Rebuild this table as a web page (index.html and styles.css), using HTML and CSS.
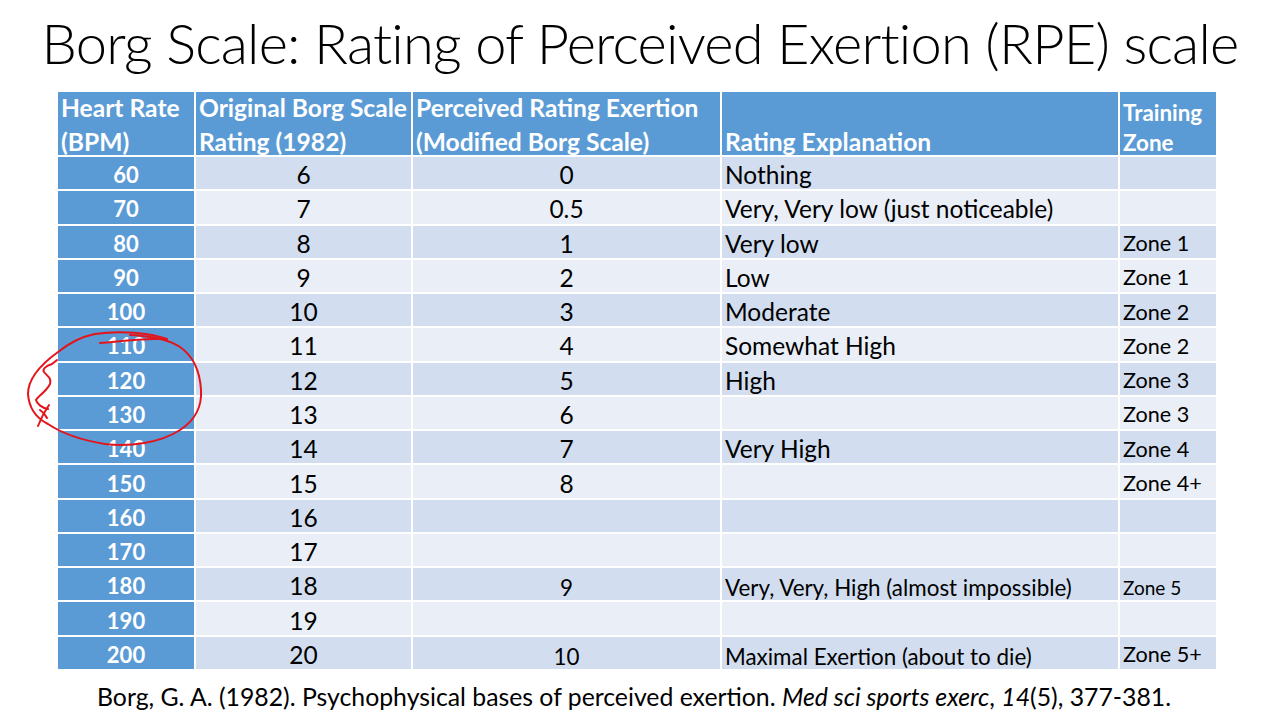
FILE: index.html
```html
<!DOCTYPE html>
<html lang="en">
<head>
<meta charset="utf-8">
<title>Borg Scale</title>
<link rel="stylesheet" href="styles.css">
</head>
<body>
<div class="slide">
  <h1 class="title">Borg Scale: Rating of Perceived Exertion (RPE) scale</h1>
  <div class="table-wrap">
    <div class="grid">
      <div class="hd"><span>Heart Rate<br>(BPM)</span></div>
      <div class="hd"><span>Original Borg Scale<br>Rating (1982)</span></div>
      <div class="hd"><span>Perceived Rating Exertion<br>(Modified Borg Scale)</span></div>
      <div class="hd"><span>Rating Explanation</span></div>
      <div class="hd hd-zone"><span>Training<br>Zone</span></div>

      <div class="c hr odd">60</div><div class="c num odd">6</div><div class="c num odd">0</div><div class="c txt odd">Nothing</div><div class="c zone odd"></div>
      <div class="c hr">70</div><div class="c num">7</div><div class="c num">0.5</div><div class="c txt">Very, Very low (just noticeable)</div><div class="c zone"></div>
      <div class="c hr odd">80</div><div class="c num odd">8</div><div class="c num odd">1</div><div class="c txt odd">Very low</div><div class="c zone odd">Zone 1</div>
      <div class="c hr">90</div><div class="c num">9</div><div class="c num">2</div><div class="c txt">Low</div><div class="c zone">Zone 1</div>
      <div class="c hr odd">100</div><div class="c num odd">10</div><div class="c num odd">3</div><div class="c txt odd">Moderate</div><div class="c zone odd">Zone 2</div>
      <div class="c hr">110</div><div class="c num">11</div><div class="c num">4</div><div class="c txt">Somewhat High</div><div class="c zone">Zone 2</div>
      <div class="c hr odd">120</div><div class="c num odd">12</div><div class="c num odd">5</div><div class="c txt odd">High</div><div class="c zone odd">Zone 3</div>
      <div class="c hr">130</div><div class="c num">13</div><div class="c num">6</div><div class="c txt"></div><div class="c zone">Zone 3</div>
      <div class="c hr odd">140</div><div class="c num odd">14</div><div class="c num odd">7</div><div class="c txt odd">Very High</div><div class="c zone odd">Zone 4</div>
      <div class="c hr">150</div><div class="c num">15</div><div class="c num">8</div><div class="c txt"></div><div class="c zone">Zone 4+</div>
      <div class="c hr odd">160</div><div class="c num odd">16</div><div class="c num odd"></div><div class="c txt odd"></div><div class="c zone odd"></div>
      <div class="c hr">170</div><div class="c num">17</div><div class="c num"></div><div class="c txt"></div><div class="c zone"></div>
      <div class="c hr odd">180</div><div class="c num odd">18</div><div class="c num odd sm">9</div><div class="c txt odd sm">Very, Very, High (almost impossible)</div><div class="c zone odd zs">Zone 5</div>
      <div class="c hr">190</div><div class="c num">19</div><div class="c num"></div><div class="c txt"></div><div class="c zone"></div>
      <div class="c hr odd">200</div><div class="c num odd">20</div><div class="c num odd sm">10</div><div class="c txt odd sm">Maximal Exertion (about to die)</div><div class="c zone odd">Zone 5+</div>
    </div>
    <svg class="ink" width="240" height="140" viewBox="0 0 240 140" aria-hidden="true">
      <g transform="translate(-10 -320)" fill="none" stroke="#e3141b" stroke-width="2" stroke-linecap="round" stroke-linejoin="round">
        <path d="M100 343 C 125 341, 150 338, 167 339"/>
        <path d="M167 339 C 150 333, 120 330, 95 334 C 80 337, 68 344, 58 352 C 40 365, 28 380, 28 394 C 29 408, 36 418, 48 424 C 60 432, 80 440, 105 444 C 130 447, 160 443, 180 430 C 196 420, 202 405, 201 390 C 200 372, 193 356, 180 347 C 168 339, 150 336, 130 335"/>
        <path d="M57 360 L 52 364 C 46 366, 42 369, 44 372 C 47 376, 52 378, 50 384 C 46 392, 38 396, 36 400 C 37 404, 42 408, 48 409"/>
        <path d="M38 426 C 41 418, 44 412, 49 405"/>
        <path d="M40 410 C 43 412, 45 414, 47 418"/>
      </g>
    </svg>
  </div>
  <p class="cite">Borg, G. A. (1982). Psychophysical bases of perceived exertion. <i>Med sci sports exerc</i>, <i>14</i>(5), 377-381.</p>
</div>
</body>
</html>
```

FILE: styles.css
```css
* { box-sizing: border-box; }
html, body { margin: 0; padding: 0; background: #fff; }
body { font-family: Lato, "Open Sans", "DejaVu Sans", sans-serif; color: #000; }
.slide { width: 1280px; height: 720px; overflow: hidden; display: flex; flex-direction: column; }
.title {
  margin: 0;
  height: 92px;
  display: flex; align-items: center; justify-content: center;
  font-weight: 300; font-size: 56px; letter-spacing: -0.8px;
  padding-bottom: 8px;
  white-space: nowrap;
}
.table-wrap { position: relative; padding-left: 58px; }
.grid {
  display: grid;
  width: 1158px;
  grid-template-columns: 136px 215px 307px 396px 96px;
  grid-template-rows: 63px repeat(15, 32.27px);
  gap: 2px;
  background: #fff;
}
.hd {
  background: #5b9bd5; color: #fff; font-weight: 700;
  font-size: 24.6px; line-height: 34px;
  padding: 0 0 0 3px;
  display: flex; align-items: flex-end;
  white-space: nowrap;
  overflow: visible;
}
.hd span { margin-bottom: -4px; }
.hd-zone { font-size: 22.4px; line-height: 30px; }
.hd-zone span { margin-bottom: -3px; }
.c {
  background: #eaeff7; display: flex; align-items: center;
  font-size: 24.5px; padding: 3px 3px 0; white-space: nowrap;
}
.c.odd { background: #d2deef; }
.c.hr { background: #5b9bd5; color: #fff; font-weight: 700; font-size: 22px; justify-content: center; padding-left: 0; padding-right: 0; }
.c.num { justify-content: center; }
.c.sm { font-size: 22.4px; padding-top: 7px; }
.c.zone { font-size: 21.6px; }
.c.zone.zs { font-size: 19px; padding-top: 7px; }
.ink { position: absolute; left: 10px; top: 228px; pointer-events: none; }
.cite { margin: 0; text-align: center; font-size: 24.8px; padding: 13px 12px 0 0; white-space: nowrap; }
```
